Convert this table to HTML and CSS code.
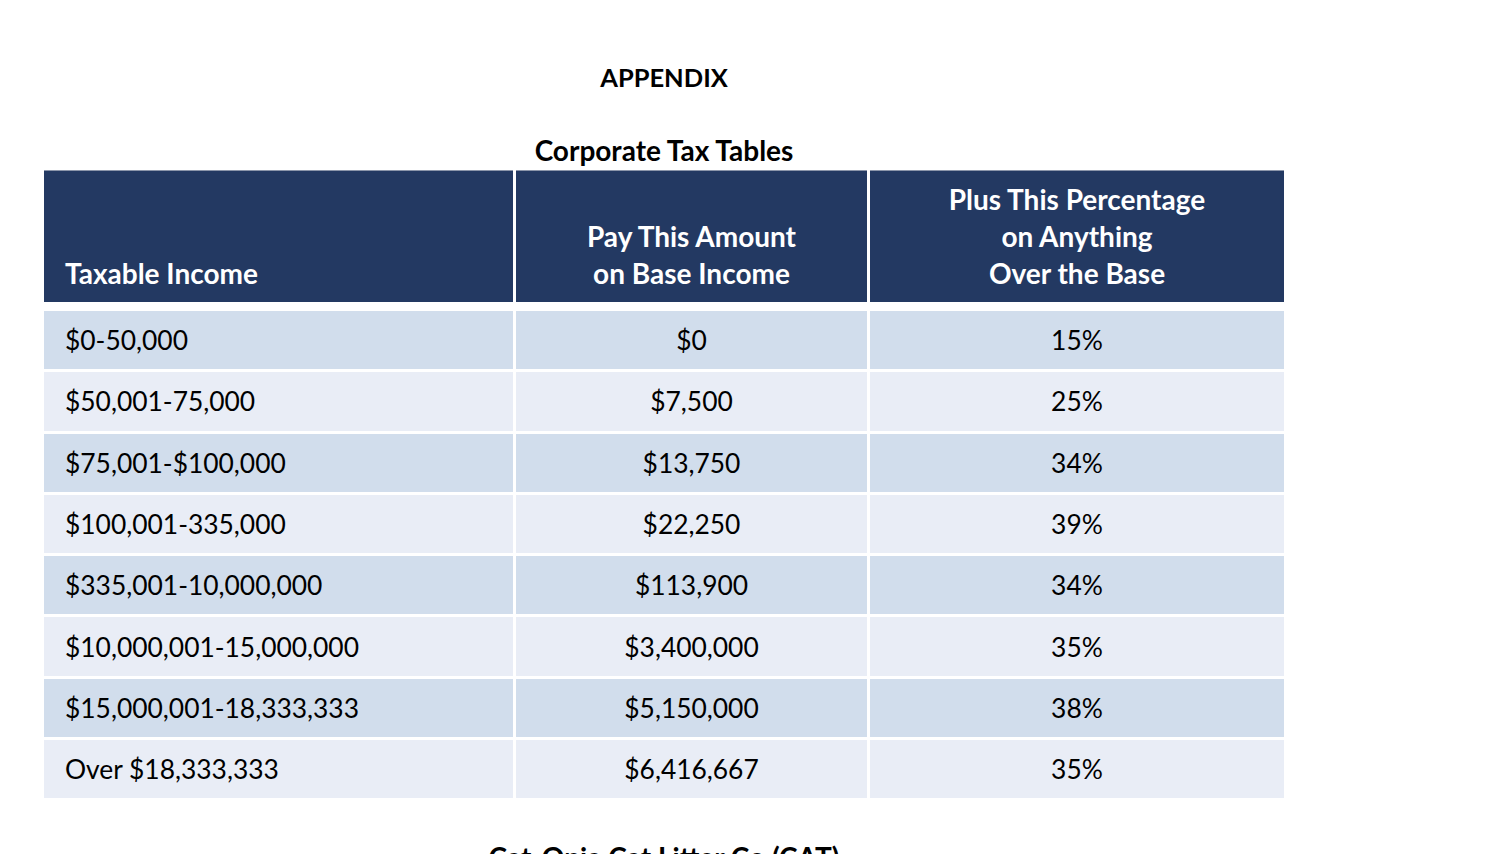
FILE: index.html
```html
<!DOCTYPE html>
<html lang="en">
<head>
<meta charset="utf-8">
<title>Appendix - Corporate Tax Tables</title>
<link rel="stylesheet" href="styles.css">
</head>
<body>
<main class="page">
  <h1 class="title">APPENDIX</h1>
  <h2 class="subtitle">Corporate Tax Tables</h2>
  <div class="table">
    <div class="row head">
      <div class="cell left">Taxable Income</div>
      <div class="cell">Pay This Amount<br>on Base Income</div>
      <div class="cell">Plus This Percentage<br>on Anything<br>Over the Base</div>
    </div>
    <div class="row odd">
      <div class="cell left">$0-50,000</div>
      <div class="cell">$0</div>
      <div class="cell">15%</div>
    </div>
    <div class="row even">
      <div class="cell left">$50,001-75,000</div>
      <div class="cell">$7,500</div>
      <div class="cell">25%</div>
    </div>
    <div class="row odd">
      <div class="cell left">$75,001-$100,000</div>
      <div class="cell">$13,750</div>
      <div class="cell">34%</div>
    </div>
    <div class="row even">
      <div class="cell left">$100,001-335,000</div>
      <div class="cell">$22,250</div>
      <div class="cell">39%</div>
    </div>
    <div class="row odd">
      <div class="cell left">$335,001-10,000,000</div>
      <div class="cell">$113,900</div>
      <div class="cell">34%</div>
    </div>
    <div class="row even">
      <div class="cell left">$10,000,001-15,000,000</div>
      <div class="cell">$3,400,000</div>
      <div class="cell">35%</div>
    </div>
    <div class="row odd">
      <div class="cell left">$15,000,001-18,333,333</div>
      <div class="cell">$5,150,000</div>
      <div class="cell">38%</div>
    </div>
    <div class="row even">
      <div class="cell left">Over $18,333,333</div>
      <div class="cell">$6,416,667</div>
      <div class="cell">35%</div>
    </div>
  </div>
  <h2 class="next">Cat-Opia Cat Litter Co (CAT)</h2>
</main>
</body>
</html>
```
FILE: styles.css
```css
html, body {
  margin: 0;
  padding: 0;
  background: #ffffff;
}
body {
  font-family: Lato, "Open Sans", "Liberation Sans", sans-serif;
  color: #000000;
  overflow: hidden;
  height: 854px;
}
.page {
  width: 1240px;
  margin-left: 44px;
  padding-top: 60px;
}
.title,
.subtitle,
.next {
  margin: 0;
  text-align: center;
  font-weight: 700;
  font-size: 28px;
  line-height: 34px;
}
.title {
  font-size: 25.5px;
}
.subtitle {
  margin-top: 39px;
  margin-bottom: 3px;
}
.table {
  display: flex;
  flex-direction: column;
  gap: 3px;
}
.row {
  display: grid;
  grid-template-columns: 469px 351px 414px;
  column-gap: 3px;
}
.cell {
  display: flex;
  align-items: center;
  justify-content: center;
  text-align: center;
  font-size: 26.4px;
  height: 58.3px;
  box-sizing: border-box;
}
.cell.left {
  justify-content: flex-start;
  text-align: left;
  padding-left: 21px;
}
.head {
  margin-bottom: 6px;
}
.head .cell {
  height: 132px;
  align-items: flex-end;
  background: #233962;
  color: #ffffff;
  font-size: 28px;
  font-weight: 700;
  line-height: 37px;
  padding-bottom: 10px;
  border-top: 1px solid #8c96aa;
}
.odd .cell {
  background: #d1ddec;
}
.even .cell {
  background: #e9edf6;
}
.next {
  margin-top: 42px;
}
```
